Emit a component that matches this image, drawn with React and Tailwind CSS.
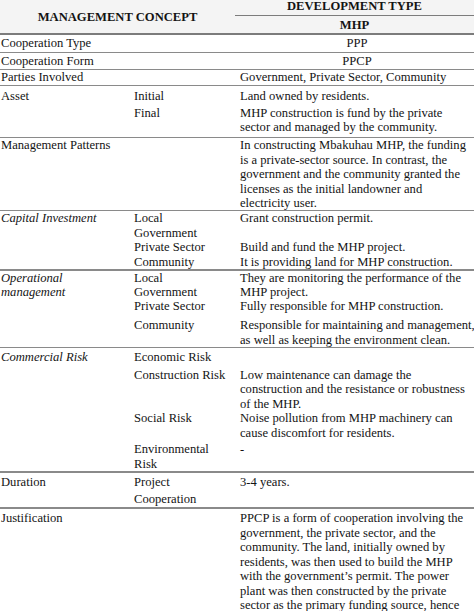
import React from "react";

const serif = { fontFamily: '"Liberation Serif", "Times New Roman", serif' };

const Lines = ({ lines }) => (
  <div>
    {lines.map((l, i) => (
      <div key={i} className="whitespace-nowrap">
        {l}
      </div>
    ))}
  </div>
);

// one sub row: middle column label + description
const Sub = ({ sub, desc = [], className = "" }) => (
  <div className={`grid grid-cols-[106px_1fr] ${className}`}>
    <Lines lines={sub} />
    <Lines lines={desc} />
  </div>
);

const Row = ({ label, italic, className = "", children }) => (
  <div className={`flex border-[#8a8a8a] ${className}`}>
    <div className={`w-[134px] shrink-0 pl-[1px] ${italic ? "italic" : ""}`}>
      <Lines lines={label} />
    </div>
    <div className="flex-1">{children}</div>
  </div>
);

export default function App() {
  return (
    <div
      className="w-[474px] h-[611px] overflow-hidden bg-white text-[12.6px] leading-[14.5px] text-[#141414]"
      style={serif}
    >
      {/* header */}
      <div className="flex h-[35px] bg-[#f4f4f4] border-b-2 border-[#7c7c7c]">
        <div className="w-[235px] flex items-center justify-center font-bold pt-[1px]">
          MANAGEMENT CONCEPT
        </div>
        <div className="flex-1 flex flex-col">
          <div className="h-[16px] border-b border-[#7c7c7c] text-center font-bold leading-[13px]">
            DEVELOPMENT TYPE
          </div>
          <div className="flex-1 text-center font-bold pt-[2px]">MHP</div>
        </div>
      </div>

      {/* simple rows */}
      <div className="flex h-[18px] border-b border-[#8a8a8a] pt-[1px]">
        <div className="w-[240px] pl-[1px]">Cooperation Type</div>
        <div className="flex-1 text-center">PPP</div>
      </div>
      <div className="flex h-[17px] border-b border-[#8a8a8a] pt-[1px]">
        <div className="w-[240px] pl-[1px]">Cooperation Form</div>
        <div className="flex-1 text-center">PPCP</div>
      </div>
      <div className="flex h-[16px] border-b border-[#8a8a8a]">
        <div className="w-[240px] pl-[1px]">Parties Involved</div>
        <div className="flex-1">Government, Private Sector, Community</div>
      </div>

      <Row label={["Asset"]} className="pt-[3px] h-[52px] border-b">
        <Sub sub={["Initial"]} desc={["Land owned by residents."]} />
        <Sub
          className="mt-[2px]"
          sub={["Final"]}
          desc={["MHP construction is fund by the private", "sector and managed by the community."]}
        />
      </Row>

      <Row label={["Management Patterns"]} className="h-[73px] border-b">
        <Sub
          sub={[""]}
          desc={[
            "In constructing Mbakuhau MHP, the funding",
            "is a private-sector source. In contrast, the",
            "government and the community granted the",
            "licenses as the initial landowner and",
            "electricity user.",
          ]}
        />
      </Row>

      <Row label={["Capital Investment"]} italic className="h-[60px] border-b-2 border-[#7c7c7c]">
        <Sub sub={["Local", "Government"]} desc={["Grant construction permit."]} />
        <Sub sub={["Private Sector"]} desc={["Build and fund the MHP project."]} />
        <Sub sub={["Community"]} desc={["It is providing land for MHP construction."]} />
      </Row>

      <Row label={["Operational", "management"]} italic className="h-[77px] border-b leading-[13.5px] pt-[1px]">
        <Sub
          sub={["Local", "Government"]}
          desc={["They are monitoring the performance of the", "MHP project."]}
        />
        <Sub sub={["Private Sector"]} desc={["Fully responsible for MHP construction."]} className="pb-[5px] leading-[14px]" />
        <Sub
          className="leading-[14.5px]"
          sub={["Community"]}
          desc={["Responsible for maintaining and management,", "as well as keeping the environment clean."]}
        />
      </Row>

      <Row label={["Commercial Risk"]} italic className="pt-[2px] h-[125px] border-b-2 border-[#7c7c7c]">
        <Sub sub={["Economic Risk"]} />
        <Sub
          className="mt-[3px]"
          sub={["Construction Risk"]}
          desc={[
            "Low maintenance can damage the",
            "construction and the resistance or robustness",
            "of the MHP.",
          ]}
        />
        <Sub sub={["Social Risk"]} desc={["Noise pollution from MHP machinery can", "cause discomfort for residents."]} />
        <Sub className="mt-[2px]" sub={["Environmental", "Risk"]} desc={["-"]} />
      </Row>

      <Row label={["Duration"]} className="pt-[2px] h-[36px] border-b-2 border-[#7c7c7c]">
        <Sub sub={["Project"]} desc={["3-4 years."]} />
        <Sub className="mt-[2px]" sub={["Cooperation"]} />
      </Row>

      <Row label={["Justification"]} className="pt-[2px]">
        <Sub
          sub={[""]}
          desc={[
            "PPCP is a form of cooperation involving the",
            "government, the private sector, and the",
            "community. The land, initially owned by",
            "residents, was then used to build the MHP",
            "with the government\u2019s permit. The power",
            "plant was then constructed by the private",
            "sector as the primary funding source, hence",
          ]}
        />
      </Row>
    </div>
  );
}
